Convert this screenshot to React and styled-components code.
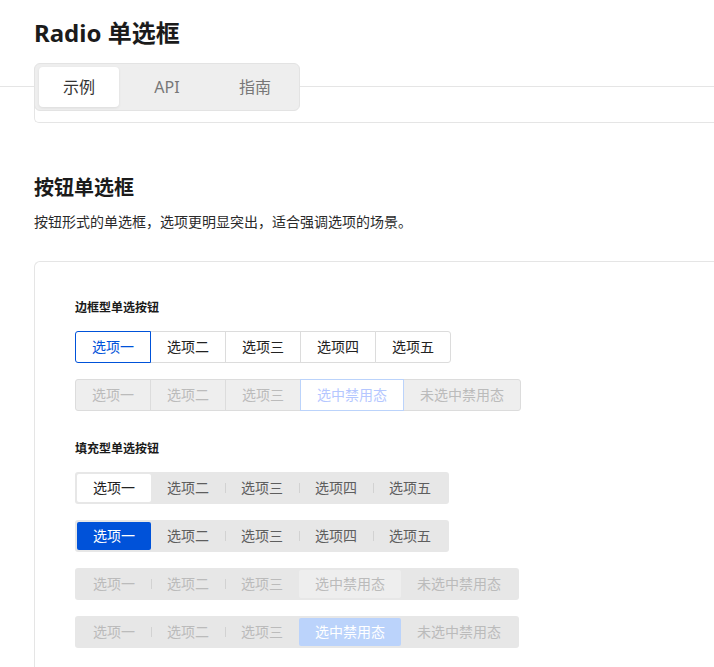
import React from "react";
import styled, { createGlobalStyle } from "styled-components";

const GlobalStyle = createGlobalStyle`
    html, body {
        margin: 0;
        padding: 0;
        background: #ffffff;
        overflow: hidden;
    }
    body {
        font-family: "Noto Sans", "Noto Sans CJK SC", sans-serif;
        color: #222222;
    }
`;

const Page = styled.div`
    padding-left: 34px;
`;

const Title = styled.h1`
    margin: 18px 0 0;
    font-size: 24px;
    line-height: 30px;
    font-weight: 700;
    color: #1b1b1b;
`;

const TabArea = styled.div`
    margin: 38px 0 0 -34px;
    border-top: 1px solid #e5e5e5;
`;

const TabBody = styled.div`
    display: flex;
    margin-left: 34px;
    padding-bottom: 11px;
    border-left: 1px solid #e5e5e5;
    border-bottom: 1px solid #e5e5e5;
    border-bottom-left-radius: 5px;
`;

const TabBar = styled.div`
    position: relative;
    z-index: 1;
    display: flex;
    gap: 8px;
    margin: -24px 0 0 -1px;
    padding: 3px 4px;
    background: #eeeeee;
    border: 1px solid #e3e3e3;
    border-radius: 6px;
`;

const Tab = styled.div`
    width: 80px;
    height: 40px;
    line-height: 40px;
    text-align: center;
    font-size: 16px;
    border-radius: 4px;
    color: ${(p) => (p.active ? "#333333" : "#777777")};
    background: ${(p) => (p.active ? "#ffffff" : "transparent")};
    box-shadow: ${(p) => (p.active ? "0 1px 3px rgba(0,0,0,0.08)" : "none")};
`;

const Heading = styled.h2`
    margin: 51px 0 0;
    font-size: 20px;
    line-height: 28px;
    font-weight: 700;
    color: #1b1b1b;
`;

const Desc = styled.p`
    margin: 9px 0 0;
    font-size: 14px;
    line-height: 22px;
    color: #2a2a2a;
`;

const DemoCard = styled.div`
    margin-top: 28px;
    padding: 36px 40px 60px;
    border: 1px solid #e5e5e5;
    border-right: none;
    border-radius: 6px 0 0 6px;
`;

const Block = styled.div`
    & + & {
        margin-top: 28px;
    }
`;

const Label = styled.div`
    font-size: 12px;
    line-height: 20px;
    font-weight: 600;
    color: #1a1a1a;
    margin-bottom: 13px;
`;

const Rows = styled.div`
    display: flex;
    flex-direction: column;
    align-items: flex-start;
    gap: 16px;
`;

const OutlineGroup = styled.div`
    display: flex;
`;

const outlineColors = (p) => {
    if (p.disabled && p.selected) return { bg: "#ffffff", border: "#bbd3fb", color: "#b5c7ff" };
    if (p.disabled) return { bg: "#eeeeee", border: "#dcdcdc", color: "#bbbbbb" };
    if (p.selected) return { bg: "#ffffff", border: "#0052d9", color: "#0052d9" };
    return { bg: "#ffffff", border: "#dcdcdc", color: "#222222" };
};

const OutlineButton = styled.div`
    position: relative;
    z-index: ${(p) => (p.selected ? 1 : 0)};
    box-sizing: border-box;
    height: 32px;
    line-height: 30px;
    padding: 0 16px;
    font-size: 14px;
    white-space: nowrap;
    background: ${(p) => outlineColors(p).bg};
    border: 1px solid ${(p) => outlineColors(p).border};
    color: ${(p) => outlineColors(p).color};
    & + & {
        margin-left: -1px;
    }
    &:first-child {
        border-radius: 3px 0 0 3px;
    }
    &:last-child {
        border-radius: 0 3px 3px 0;
    }
`;

const FillGroup = styled.div`
    display: flex;
    padding: 2px;
    background: #e7e7e7;
    border-radius: 3px;
`;

const fillColors = (p) => {
    if (p.disabled && p.selected) {
        return p.primary ? { bg: "#bbd3fb", color: "#ffffff" } : { bg: "#eeeeee", color: "#bbbbbb" };
    }
    if (p.disabled) return { bg: "transparent", color: "#bbbbbb" };
    if (p.selected) {
        return p.primary ? { bg: "#0052d9", color: "#ffffff" } : { bg: "#ffffff", color: "#222222" };
    }
    return { bg: "transparent", color: "#5e5e5e" };
};

const FillButton = styled.div`
    position: relative;
    height: 28px;
    line-height: 28px;
    padding: 0 16px;
    font-size: 14px;
    white-space: nowrap;
    border-radius: 2px;
    background: ${(p) => fillColors(p).bg};
    color: ${(p) => fillColors(p).color};

    &::before {
        content: "";
        display: ${(p) => (p.divider ? "block" : "none")};
        position: absolute;
        left: 0;
        top: 9px;
        width: 1px;
        height: 10px;
        background: #d2d2d2;
    }
`;

const basic = ["选项一", "选项二", "选项三", "选项四", "选项五"];
const disabledOpts = ["选项一", "选项二", "选项三", "选中禁用态", "未选中禁用态"];

function OutlineRow({ options, selected, disabled }) {
    return (
        <OutlineGroup>
            {options.map((o, i) => (
                <OutlineButton key={o} selected={i === selected} disabled={disabled}>
                    {o}
                </OutlineButton>
            ))}
        </OutlineGroup>
    );
}

function FillRow({ options, selected, disabled, primary }) {
    return (
        <FillGroup>
            {options.map((o, i) => (
                <FillButton
                    key={o}
                    selected={i === selected}
                    disabled={disabled}
                    primary={primary}
                    divider={i > 0 && i !== selected && i - 1 !== selected}
                >
                    {o}
                </FillButton>
            ))}
        </FillGroup>
    );
}

export default function App() {
    return (
        <Page>
            <GlobalStyle />
            <Title>Radio 单选框</Title>
            <TabArea>
                <TabBody>
                    <TabBar>
                        <Tab active>示例</Tab>
                        <Tab>API</Tab>
                        <Tab>指南</Tab>
                    </TabBar>
                </TabBody>
            </TabArea>

            <Heading>按钮单选框</Heading>
            <Desc>按钮形式的单选框，选项更明显突出，适合强调选项的场景。</Desc>

            <DemoCard>
                <Block>
                    <Label>边框型单选按钮</Label>
                    <Rows>
                        <OutlineRow options={basic} selected={0} />
                        <OutlineRow options={disabledOpts} selected={3} disabled />
                    </Rows>
                </Block>
                <Block>
                    <Label>填充型单选按钮</Label>
                    <Rows>
                        <FillRow options={basic} selected={0} />
                        <FillRow options={basic} selected={0} primary />
                        <FillRow options={disabledOpts} selected={3} disabled />
                        <FillRow options={disabledOpts} selected={3} disabled primary />
                    </Rows>
                </Block>
            </DemoCard>
        </Page>
    );
}
